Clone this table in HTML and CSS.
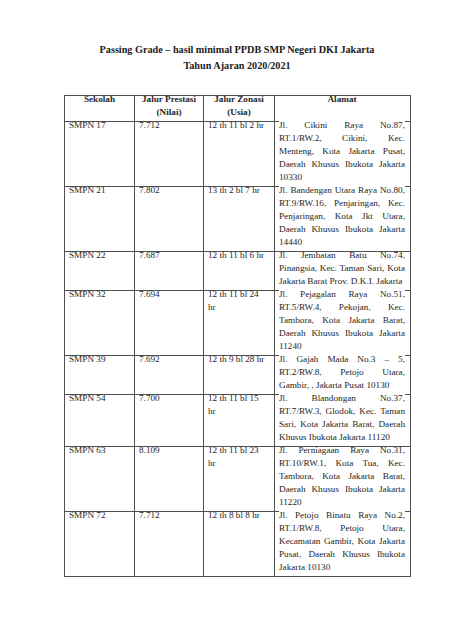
FILE: index.html
```html
<!DOCTYPE html>
<html lang="id">
<head>
<meta charset="utf-8">
<title>Passing Grade PPDB SMP Negeri DKI Jakarta</title>
<link rel="stylesheet" href="styles.css">
</head>
<body>
<div class="page">
  <header class="title">
    <div>Passing Grade – hasil minimal PPDB SMP Negeri DKI Jakarta</div>
    <div>Tahun Ajaran 2020/2021</div>
  </header>
  <table class="grid">
    <colgroup><col class="c1"><col class="c2"><col class="c3"><col class="c4"></colgroup>
    <thead>
      <tr>
        <th><div class="cell">Sekolah</div></th>
        <th><div class="cell">Jalur Prestasi (Nilai)</div></th>
        <th><div class="cell">Jalur Zonasi (Usia)</div></th>
        <th class="al"><div class="cell">Alamat</div></th>
      </tr>
    </thead>
    <tbody>
      <tr>
        <td><div class="cell">SMPN 17</div></td>
        <td><div class="cell">7.712</div></td>
        <td class="zon"><div class="cell">12 th 11 bl 2 hr</div></td>
        <td class="al"><div class="cell addr hl">Jl. Cikini Raya No.87, RT.1/RW.2, Cikini, Kec. Menteng, Kota Jakarta Pusat, Daerah Khusus Ibukota Jakarta 10330</div></td>
      </tr>
      <tr>
        <td><div class="cell">SMPN 21</div></td>
        <td><div class="cell">7.802</div></td>
        <td class="zon"><div class="cell">13 th 2 bl 7 hr</div></td>
        <td class="al"><div class="cell addr hl">Jl. Bandengan Utara Raya No.80, RT.9/RW.16, Penjaringan, Kec. Penjaringan, Kota Jkt Utara, Daerah Khusus Ibukota Jakarta 14440</div></td>
      </tr>
      <tr>
        <td><div class="cell">SMPN 22</div></td>
        <td><div class="cell">7.687</div></td>
        <td class="zon"><div class="cell">12 th 11 bl 6 hr</div></td>
        <td class="al"><div class="cell addr">Jl. Jembatan Batu No.74, Pinangsia, Kec. Taman Sari, Kota Jakarta Barat Prov. D.K.I. Jakarta</div></td>
      </tr>
      <tr>
        <td><div class="cell">SMPN 32</div></td>
        <td><div class="cell">7.694</div></td>
        <td class="zon"><div class="cell">12 th 11 bl 24 hr</div></td>
        <td class="al"><div class="cell addr hl">Jl. Pejagalan Raya No.51, RT.5/RW.4, Pekojan, Kec. Tambora, Kota Jakarta Barat, Daerah Khusus Ibukota Jakarta 11240</div></td>
      </tr>
      <tr>
        <td><div class="cell">SMPN 39</div></td>
        <td><div class="cell">7.692</div></td>
        <td class="zon"><div class="cell">12 th 9 bl 28 hr</div></td>
        <td class="al"><div class="cell addr hl"><span class="ln">Jl. Gajah Mada No.3 – 5,</span><span class="ln">RT.2/RW.8, Petojo Utara,</span>Gambir, , Jakarta Pusat 10130</div></td>
      </tr>
      <tr>
        <td><div class="cell">SMPN 54</div></td>
        <td><div class="cell">7.700</div></td>
        <td class="zon"><div class="cell">12 th 11 bl 15 hr</div></td>
        <td class="al"><div class="cell addr hl">Jl. Blandongan No.37, RT.7/RW.3, Glodok, Kec. Taman Sari, Kota Jakarta Barat, Daerah Khusus Ibukota Jakarta 11120</div></td>
      </tr>
      <tr>
        <td><div class="cell">SMPN 63</div></td>
        <td><div class="cell">8.109</div></td>
        <td class="zon"><div class="cell">12 th 11 bl 23 hr</div></td>
        <td class="al"><div class="cell addr">Jl. Perniagaan Raya No.31, RT.10/RW.1, Kota Tua, Kec. Tambora, Kota Jakarta Barat, Daerah Khusus Ibukota Jakarta 11220</div></td>
      </tr>
      <tr>
        <td><div class="cell">SMPN 72</div></td>
        <td><div class="cell">7.712</div></td>
        <td class="zon"><div class="cell">12 th 8 bl 8 hr</div></td>
        <td class="al"><div class="cell addr hl">Jl. Petojo Binatu Raya No.2, RT.1/RW.8, Petojo Utara, Kecamatan Gambir, Kota Jakarta Pusat, Daerah Khusus Ibukota Jakarta 10130</div></td>
      </tr>
    </tbody>
  </table>
</div>
</body>
</html>
```
FILE: styles.css
```css
html, body {
  margin: 0;
  padding: 0;
  background: #ffffff;
}

body {
  font-family: "Liberation Serif", "Times New Roman", serif;
  color: #262626;
}

.page {
  width: 474px;
  min-height: 632px;
}

.title {
  padding-top: 42px;
  text-align: center;
  font-weight: bold;
  font-size: 10.2px;
  line-height: 16.3px;
  color: #1c1c1c;
}

.grid {
  margin: 20px 0 0 64px;
  width: 347px;
  table-layout: fixed;
  border-collapse: separate;
  border-spacing: 0;
  border-right: 1px solid #505050;
  border-bottom: 1px solid #505050;
  font-size: 9.2px;
  line-height: 13px;
}

.c1 { width: 70px; }
.c2 { width: 69px; }
.c3 { width: 71px; }
.c4 { width: 136px; }

.grid th,
.grid td {
  box-sizing: border-box;
  border-top: 1px solid #505050;
  border-left: 1px solid #505050;
  padding: 0 4px;
  vertical-align: top;
  text-align: left;
  font-weight: normal;
}

.grid td.zon {
  padding-right: 7px;
}

.grid td.al,
.grid th.al {
  padding: 0 5px 0 4px;
}

.cell {
  margin: -3px 0 2px;
}

.grid th .cell {
  font-weight: bold;
  text-align: center;
}

.addr {
  text-align: justify;
}

.ln {
  display: block;
  text-align: justify;
  text-align-last: justify;
}

.hl {
  background: #ffffff;
}
```
